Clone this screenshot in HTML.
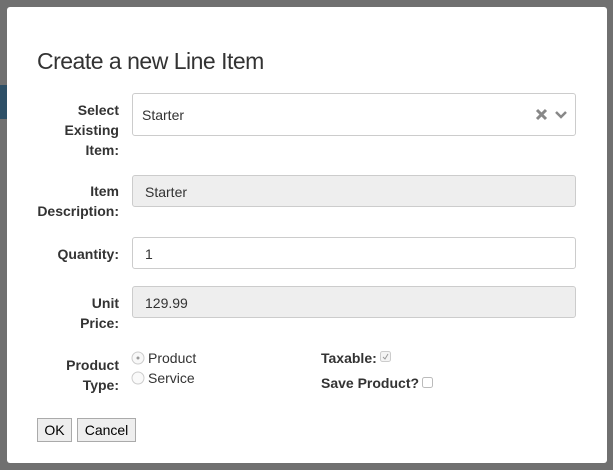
<!DOCTYPE html>
<html><head><style>
body{margin:0;width:613px;height:470px;background:#707070;position:relative;overflow:hidden;font-family:"Liberation Sans",Arial,sans-serif;}
.bl{position:absolute;left:0;top:85px;width:7px;height:34px;background:#2d4f66}
.m{position:absolute;left:7px;top:7px;width:600px;height:456px;background:#fff;border-radius:3px}
h1{position:absolute;left:30px;top:41px;margin:0;font-weight:normal;font-size:23px;color:#333;font-family:"Liberation Sans",sans-serif;letter-spacing:-0.5px}
.lb{position:absolute;right:488px;text-align:right;font-weight:bold;font-size:14px;color:#333;line-height:20px;white-space:nowrap}
.in{position:absolute;left:125px;width:444px;height:32px;border:1px solid #ccc;border-radius:3px;box-sizing:border-box;font-size:14px;color:#333;padding-left:12px;line-height:32px}
.ro{background:#eee}
.t{position:absolute;font-size:14px;color:#333}
.btn{position:absolute;top:411px;height:24px;border:1px solid #aaa;background:#eee;font-size:14px;line-height:22px;text-align:center;box-sizing:border-box}
</style></head><body>
<div class="bl"></div>
<div class="m">
<h1>Create a new Line Item</h1>
<div class="lb" style="top:93px">Select<br>Existing<br>Item:</div>
<div class="in" style="top:86px;height:43px;line-height:43px;padding-left:9px">Starter
<svg style="position:absolute;right:6px;top:14px" width="34" height="14"><path d="M2 2l9 9M11 2l-9 9" stroke="#888" stroke-width="3"/><path d="M21 4l5 5 5-5" stroke="#888" stroke-width="2.5" fill="none"/></svg></div>
<div class="lb" style="top:174px">Item<br>Description:</div>
<div class="in ro" style="top:168px">Starter</div>
<div class="lb" style="top:237px">Quantity:</div>
<div class="in" style="top:230px">1</div>
<div class="lb" style="top:286px">Unit<br>Price:</div>
<div class="in ro" style="top:279px">129.99</div>
<div class="lb" style="top:348px">Product<br>Type:</div>
<svg style="position:absolute;left:124px;top:343px" width="16" height="36"><circle cx="7" cy="8" r="6" fill="#f8f8f8" stroke="#ccc"/><circle cx="7" cy="8" r="1.5" fill="#999"/><circle cx="7" cy="28" r="6" fill="#fafafa" stroke="#ccc"/></svg>
<div class="t" style="left:141px;top:343px">Product</div>
<div class="t" style="left:141px;top:363px">Service</div>
<div class="t" style="left:314px;top:343px;font-weight:bold">Taxable:</div>
<svg style="position:absolute;left:373px;top:344px" width="12" height="12"><rect x=".5" y=".5" width="10" height="10" rx="2" fill="#f4f4f4" stroke="#ccc"/><path d="M3 6l2 2 3-5" stroke="#999" fill="none"/></svg>
<div class="t" style="left:314px;top:368px;font-weight:bold">Save Product?</div>
<svg style="position:absolute;left:415px;top:370px" width="12" height="12"><rect x=".5" y=".5" width="10" height="10" rx="2" fill="#fff" stroke="#bbb"/></svg>
<div class="btn" style="left:30px;width:35px">OK</div>
<div class="btn" style="left:70px;width:59px">Cancel</div>
</div>
</body></html>
